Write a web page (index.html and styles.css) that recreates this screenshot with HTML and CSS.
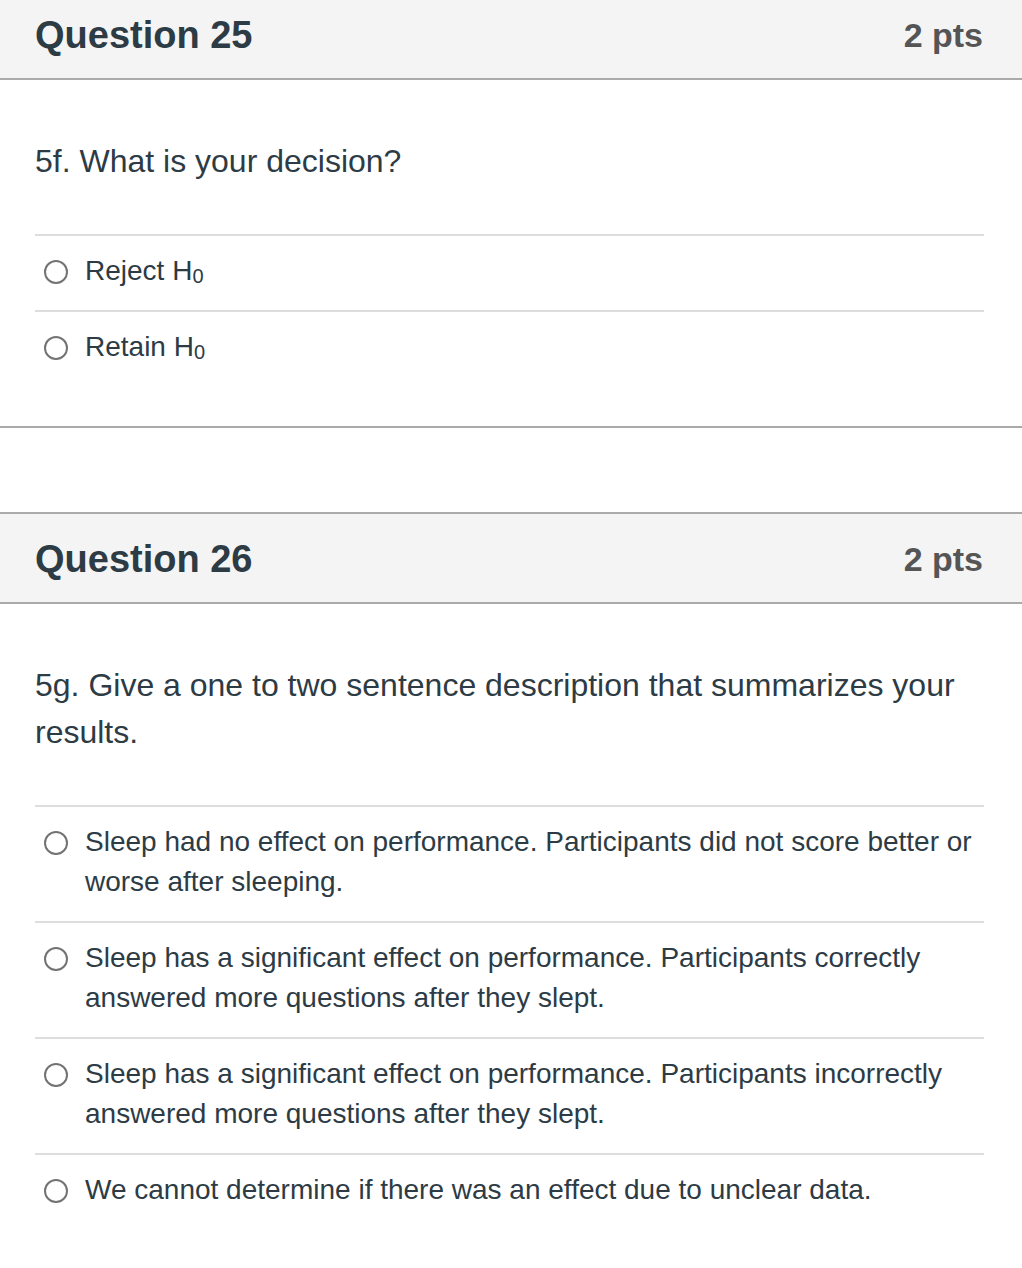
FILE: index.html
```html
<!DOCTYPE html>
<html lang="en">
<head>
<meta charset="utf-8">
<title>Quiz</title>
<link rel="stylesheet" href="styles.css">
</head>
<body>
<div class="quiz">
  <section class="question">
    <header class="q-header">
      <h2 class="q-title">Question 25</h2>
      <span class="q-points">2 pts</span>
    </header>
    <div class="q-body">
      <p class="q-text">5f. What is your decision?</p>
      <ul class="answers">
        <li class="answer"><span class="radio"></span><span class="answer-text">Reject H<sub>0</sub></span></li>
        <li class="answer"><span class="radio"></span><span class="answer-text">Retain H<sub>0</sub></span></li>
      </ul>
    </div>
  </section>

  <section class="question">
    <header class="q-header">
      <h2 class="q-title">Question 26</h2>
      <span class="q-points">2 pts</span>
    </header>
    <div class="q-body">
      <p class="q-text">5g. Give a one to two sentence description that summarizes your results.</p>
      <ul class="answers">
        <li class="answer"><span class="radio"></span><span class="answer-text">Sleep had no effect on performance. Participants did not score better or worse after sleeping.</span></li>
        <li class="answer"><span class="radio"></span><span class="answer-text">Sleep has a significant effect on performance. Participants correctly answered more questions after they slept.</span></li>
        <li class="answer"><span class="radio"></span><span class="answer-text">Sleep has a significant effect on performance. Participants incorrectly answered more questions after they slept.</span></li>
        <li class="answer"><span class="radio"></span><span class="answer-text">We cannot determine if there was an effect due to unclear data.</span></li>
      </ul>
    </div>
  </section>
</div>
</body>
</html>
```

FILE: styles.css
```css
html, body {
  margin: 0;
  padding: 0;
  background: #ffffff;
}

body {
  font-family: "Liberation Sans", Arial, Helvetica, sans-serif;
  color: #2d3b45;
}

.quiz {
  margin-top: -12px;
  display: flex;
  flex-direction: column;
  gap: 84px;
}

.question {
  border-top: 2px solid #aaaaaa;
  border-bottom: 2px solid #aaaaaa;
}

.q-header {
  background: #f4f4f4;
  border-bottom: 2px solid #aaaaaa;
  display: flex;
  align-items: center;
  justify-content: space-between;
  padding: 2px 39px 0 35px;
  box-sizing: border-box;
  height: 90px;
}

.q-title {
  margin: 0;
  font-size: 38px;
  font-weight: bold;
  color: #2d3b45;
}

.q-points {
  font-size: 34px;
  font-weight: bold;
  color: #555555;
}

.q-body {
  padding: 58px 38px 40px 35px;
}

.q-text {
  margin: 0 0 49px;
  font-size: 32px;
  line-height: 47px;
}

.answers {
  list-style: none;
  margin: 0;
  padding: 0;
}

.answer {
  display: flex;
  align-items: flex-start;
  gap: 17px;
  padding: 15px 0 19px 9px;
  border-top: 2px solid #dddddd;
  font-size: 28px;
  line-height: 40px;
}

.radio {
  flex: none;
  width: 24px;
  height: 24px;
  margin-top: 9px;
  border: 2px solid #737373;
  border-radius: 50%;
  box-sizing: border-box;
  background: #ffffff;
}

.answer-text sub {
  font-size: 20px;
  line-height: 0;
  vertical-align: -3px;
}
```
